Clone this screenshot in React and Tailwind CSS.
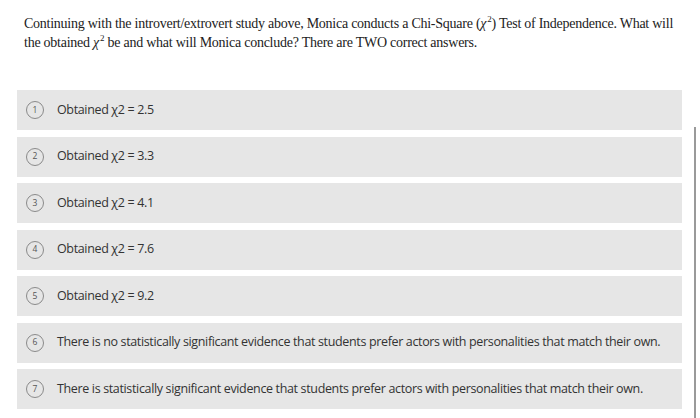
import React from 'react';

const options = [
  'Obtained \u03c72 = 2.5',
  'Obtained \u03c72 = 3.3',
  'Obtained \u03c72 = 4.1',
  'Obtained \u03c72 = 7.6',
  'Obtained \u03c72 = 9.2',
  'There is no statistically significant evidence that students prefer actors with personalities that match their own.',
  'There is statistically significant evidence that students prefer actors with personalities that match their own.',
];

const Chi = () => (
  <span className="italic">
    {'\u03c7'}
    <span className="not-italic inline-block text-[9px] leading-none relative -top-[6px] ml-[1px]">2</span>
  </span>
);

export default function App() {
  return (
    <div className="w-[700px] h-[418px] bg-white overflow-hidden relative">
      <div className="pl-[24px] pr-[16px] pt-[14px] h-[90px] font-['Liberation_Serif',serif] text-[14px] leading-[19px] tracking-[-0.25px] text-[#222]">
        <p>
          Continuing with the introvert/extrovert study above, Monica conducts a Chi-Square (<Chi />) Test of
          Independence. What will the obtained <Chi /> be and what will Monica conclude? There are TWO correct answers.
        </p>
      </div>
      <div className="flex flex-col gap-[6.5px] pl-[17px] pr-[18px]">
        {options.map((text, i) => (
          <div key={i} className="h-[40px] bg-[#e6e6e6] flex items-center pl-[9px]">
            <div className="w-[18px] h-[18px] rounded-full border border-[#8a8a8a] flex items-center justify-center font-['Open_Sans',sans-serif] text-[8.5px] text-[#555] shrink-0">
              {i + 1}
            </div>
            <span className="ml-[13px] whitespace-nowrap font-['Open_Sans',sans-serif] text-[12.5px] tracking-[-0.35px] text-[#333]">
              {text}
            </span>
          </div>
        ))}
      </div>
      <div className="absolute left-[694px] top-[127px] w-[2px] h-[300px] bg-[#9a9a9a]" />
    </div>
  );
}
